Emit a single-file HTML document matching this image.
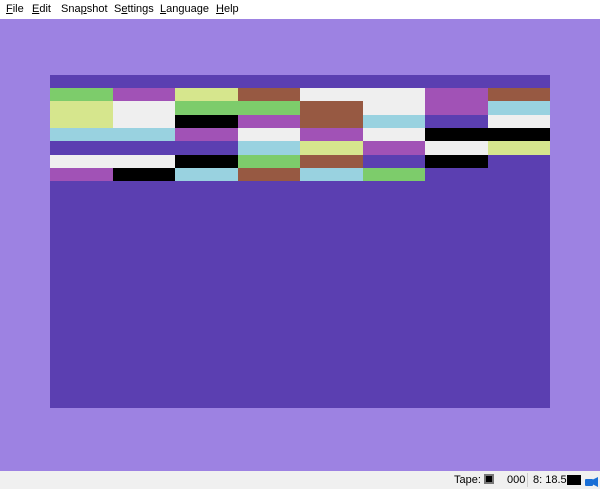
<!DOCTYPE html>
<html><head><style>
*{margin:0;padding:0;box-sizing:border-box}
body{width:600px;height:489px;overflow:hidden;background:#9d82e2;font-family:"Liberation Sans",sans-serif;position:relative}
#menu{position:absolute;left:0;top:0;width:600px;height:19px;background:#fff;font-size:11px;color:#000}
#menu span{position:absolute;top:3px}
#scr{position:absolute;left:50px;top:75px;width:500px;height:333px;background:#5b3fb1}
.b{position:absolute;height:13.4px;width:62.5px}
#status{position:absolute;left:0;top:471px;width:600px;height:18px;background:#f0f0f0;font-size:11px;color:#000}
#status span{position:absolute;top:3px}
</style></head><body>
<div id="menu">
<span style="left:6px"><u>F</u>ile</span>
<span style="left:32px"><u>E</u>dit</span>
<span style="left:61px">Sna<u>p</u>shot</span>
<span style="left:114px">S<u>e</u>ttings</span>
<span style="left:160px"><u>L</u>anguage</span>
<span style="left:216px"><u>H</u>elp</span>
</div>
<div id="scr"></div>
<div id="status">
<span style="left:454px">Tape:</span>
<div style="position:absolute;left:484px;top:3px;width:10px;height:10px;background:#000;border:2px solid #777"></div>
<span style="left:507px">000</span>
<div style="position:absolute;left:527px;top:2px;width:1px;height:14px;background:#ccc"></div>
<span style="left:533px">8: 18.5</span>
<div style="position:absolute;left:567px;top:4px;width:14px;height:10px;background:#000"></div>
<div style="position:absolute;left:585px;top:8px;width:8px;height:7px;background:#1a6fd6;border-radius:1px"></div>
<div style="position:absolute;left:592px;top:6px;width:6px;height:10px;background:#1a6fd6;clip-path:polygon(0 30%,100% 0,100% 100%,0 70%)"></div>
</div>
<script>
const C={g:"#7dcc6b",p:"#a152b6",y:"#d6e68d",r:"#975942",w:"#efefef",c:"#99d2e0",k:"#000",_:null};
const rows=["gpyrwwpr","ywggrwpc","ywkprc_w","ccpwpwkk","___cypwy","wwkgr_k_","pkcrcg__"];
const s=document.getElementById('scr');
rows.forEach((r,i)=>{[...r].forEach((ch,j)=>{if(!C[ch])return;const d=document.createElement('div');d.className='b';d.style.left=(j*62.5)+'px';d.style.top=(13+i*13.35)+'px';d.style.background=C[ch];s.appendChild(d);});});
</script>
</body></html>
